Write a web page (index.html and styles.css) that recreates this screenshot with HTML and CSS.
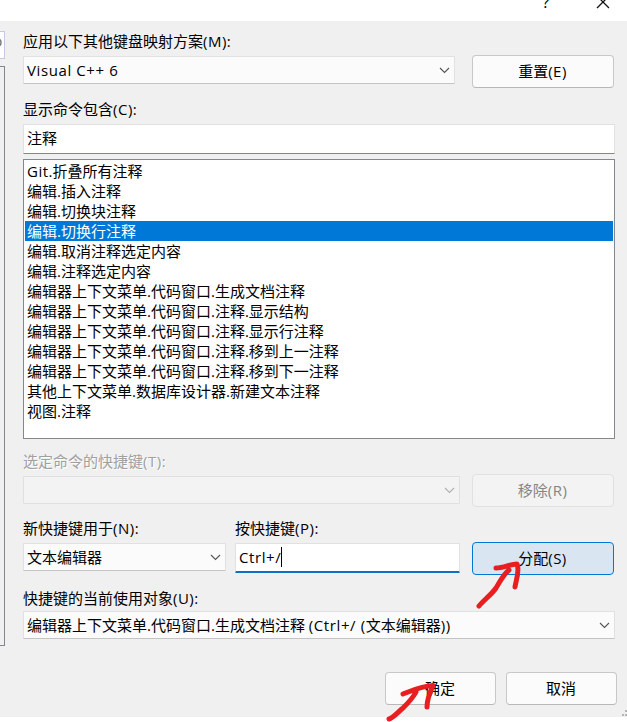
FILE: index.html
```html
<!DOCTYPE html>
<html lang="zh-CN">
<head>
<meta charset="utf-8">
<title>选项</title>
<link rel="stylesheet" href="styles.css">
</head>
<body>
<header class="titlebar">
  <span class="help">?</span>
  <svg class="close" width="14" height="14" viewBox="0 0 14 14"><path d="M1 1L13 13M13 1L1 13"/></svg>
</header>
<div class="dialog">
  <aside class="side">
    <div class="search"><svg width="4" height="10" viewBox="0 0 4 10"><path d="M-2 1C2 1 2 8 -2 8"/></svg></div>
    <div class="tree"></div>
  </aside>
  <main class="panel">
    <label class="label">应用以下其他键盘映射方案<span class="key">(M):</span></label>
    <div class="row">
      <div class="combo scheme"><span class="value-wide">Visual C++ 6</span><svg class="chev" width="11" height="7" viewBox="0 0 11 7"><path d="M1 1L5.5 5.5L10 1"/></svg></div>
      <button class="btn">重置<span class="key">(E)</span></button>
    </div>
    <label class="label label-filter">显示命令包含<span class="key">(C):</span></label>
    <div class="input filter">注释</div>
    <ul class="list">
      <li><span class="key">Git</span>.折叠所有注释</li>
      <li>编辑.插入注释</li>
      <li>编辑.切换块注释</li>
      <li class="selected">编辑.切换行注释</li>
      <li>编辑.取消注释选定内容</li>
      <li>编辑.注释选定内容</li>
      <li>编辑器上下文菜单.代码窗口.生成文档注释</li>
      <li>编辑器上下文菜单.代码窗口.注释.显示结构</li>
      <li>编辑器上下文菜单.代码窗口.注释.显示行注释</li>
      <li>编辑器上下文菜单.代码窗口.注释.移到上一注释</li>
      <li>编辑器上下文菜单.代码窗口.注释.移到下一注释</li>
      <li>其他上下文菜单.数据库设计器.新建文本注释</li>
      <li>视图.注释</li>
    </ul>
    <label class="label label-current">选定命令的快捷键<span class="key">(T):</span></label>
    <div class="row">
      <div class="combo current off"><svg class="chev" width="11" height="7" viewBox="0 0 11 7"><path d="M1 1L5.5 5.5L10 1"/></svg></div>
      <button class="btn off">移除<span class="key">(R)</span></button>
    </div>
    <div class="labels">
      <label class="label scope-label">新快捷键用于<span class="key">(N):</span></label>
      <label class="label">按快捷键<span class="key">(P):</span></label>
    </div>
    <div class="row keys">
      <div class="combo scope">文本编辑器<svg class="chev" width="11" height="7" viewBox="0 0 11 7"><path d="M1 1L5.5 5.5L10 1"/></svg></div>
      <div class="input press"><span class="value-wide">Ctrl+/</span><i class="caret"></i></div>
      <button class="btn hot">分配<span class="key">(S)</span></button>
    </div>
    <label class="label label-used">快捷键的当前使用对象<span class="key">(U):</span></label>
    <div class="combo used"><span>编辑器上下文菜单.代码窗口.生成文档注释 <span class="value-wide">(Ctrl+/ (</span>文本编辑器<span class="key">))</span></span><svg class="chev" width="11" height="7" viewBox="0 0 11 7"><path d="M1 1L5.5 5.5L10 1"/></svg></div>
    <footer class="footer">
      <button class="btn small">确定</button>
      <button class="btn small">取消</button>
    </footer>
  </main>
  <svg class="grip" width="5" height="8" viewBox="0 0 5 8"><path d="M0 5h2v2H0zM3 5h2v2H3zM3 1h2v2H3z"/></svg>
</div>
<svg class="marks" width="627" height="722" viewBox="0 0 627 722">
  <path d="M479 606C484 600 492 594 496 588C501 580 503 575 509 570M496 568C504 568 510 564 517 564C520 571 516 580 515 587"/>
  <path d="M389 719C393 718 399 711 403 708C408 703 413 698 416 692M403 694C413 690 422 686 433 685.500C430 692 427 699 427 707"/>
</svg>
</body>
</html>
```
FILE: styles.css
```css
* { box-sizing: border-box; }
body {
  margin: 0;
  height: 722px;
  overflow: hidden;
  position: relative;
  background: #fff;
  color: #000;
  font: 15px/20px "Open Sans", "Noto Sans CJK SC", sans-serif;
}
.titlebar {
  height: 21px;
  display: flex;
  justify-content: flex-end;
  align-items: flex-start;
  padding-right: 17px;
  overflow: hidden;
}
.help { width: 10px; margin: -8px 45px 0 0; font-size: 16px; text-align: center; }
.close { margin-top: -5px; fill: none; stroke: #111; stroke-width: 1.3; }
.dialog {
  display: flex;
  position: relative;
  height: 696px;
  background: #f0f0f0;
}
.side { width: 23px; padding-top: 10px; }
.search {
  width: 5px;
  height: 28px;
  padding-top: 6px;
  background: #fff;
  border: solid #c8c8de;
  border-width: 1px 1px 1px 0;
}
.search svg { display: block; fill: none; stroke: #777; stroke-width: 1.5; }
.tree {
  width: 5px;
  height: 580px;
  margin-top: 7px;
  border: solid #828790;
  border-width: 1px 1px 1px 0;
}
.panel { width: 592px; padding-top: 10px; }
.label { display: block; height: 20px; white-space: nowrap; }
.row { display: flex; justify-content: space-between; align-items: center; height: 33px; margin-top: 4px; padding-right: 1px; }
.combo, .input {
  display: flex;
  align-items: center;
  height: 28px;
  padding: 0 4px 0 3px;
  white-space: nowrap;
  border: 1px solid #e1e1e1;
  border-bottom-color: #c4c4c4;
  border-radius: 1px;
  background: #fbfbfb;
}
.chev { margin-left: auto; fill: none; stroke: #555; stroke-width: 1.1; }
.value-wide { letter-spacing: .6px; }
.key { letter-spacing: .5px; }
.scheme { width: 432px; margin-top: -3px; }
.btn {
  width: 142px;
  height: 33px;
  padding: 0 1px 2px 0;
  border: 1px solid #c8c8c8;
  border-bottom-color: #b8b8b8;
  border-radius: 4px;
  background: #fbfbfb;
  color: #000;
  font: inherit;
}
.label-filter { margin-top: 11px; }
.input { background: #fff; }
.filter { height: 30px; margin-top: 5px; border-bottom-color: #868686; padding-bottom: 3px; }
.list {
  height: 280px;
  margin: 5px 0 0;
  padding: 1px;
  list-style: none;
  background: #fff;
  border: 1px solid #828790;
}
.list li { height: 20px; padding-left: 2px; white-space: nowrap; }
.list .selected { background: #0078d7; color: #fff; }
.label-current { margin-top: 12px; color: #a0a0a0; text-shadow: 1px 1px #fff; }
.label-current + .row { margin-top: 3px; }
.current { width: 437px; margin-top: -1px; }
.combo.off { background: #f3f3f3; border-color: #e0e0e0; }
.off .chev { stroke: #b0b0b0; }
.btn.off { color: #858585; background: #f3f3f3; border-color: #e1e1e1; }
.labels { display: flex; margin-top: 11px; }
.scope-label { width: 212px; }
.keys { align-items: flex-start; }
.scope { width: 203px; margin-top: 1px; }
.press { width: 225px; height: 30px; margin: 1px 3px 0 0; padding-bottom: 2px; border-bottom: 2px solid #0a70c4; }
.caret { width: 1px; height: 20px; background: #000; }
.btn.hot { background: #d9e6f2; border-color: #0078d4; }
.label-used { margin-top: 13px; }
.used { margin-top: 3px; }
.footer { display: flex; justify-content: flex-end; gap: 10px; margin: 33px -2px 0 0; }
.btn.small { width: 111px; }
.grip { position: absolute; right: 0; bottom: 0; fill: #b5b5b5; }
.marks {
  position: absolute;
  left: 0;
  top: 0;
  fill: none;
  stroke: #e81e20;
  stroke-width: 5;
  stroke-linecap: round;
  stroke-linejoin: round;
  pointer-events: none;
}
```
